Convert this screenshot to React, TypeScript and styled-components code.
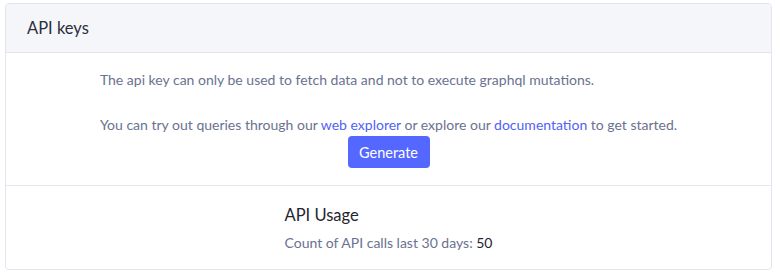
import React from 'react'
import styled, { createGlobalStyle } from 'styled-components'

const GlobalStyle = createGlobalStyle`
  html, body {
    margin: 0;
    padding: 0;
    background: #ffffff;
  }
  body {
    font-family: "Lato", "Noto Sans", sans-serif;
    -webkit-font-smoothing: antialiased;
  }
`;

const Page = styled.div`
  padding: 3px 3px 0 5px;
`;

const Card = styled.section`
  width: 767px;
  height: 267px;
  box-sizing: border-box;
  border: 1px solid #e3e4ee;
  border-radius: 4px;
  overflow: hidden;
  display: flex;
  flex-direction: column;
`;

const CardHeader = styled.header`
  height: 49px;
  box-sizing: border-box;
  padding: 0 0 0 21px;
  display: flex;
  align-items: center;
  background: #f5f6fa;
  border-bottom: 1px solid #e3e4ee;
  font-size: 16.5px;
  color: #2b2e3d;
`;

const Section = styled.div<{ $height: number; $last?: boolean }>`
  height: ${(p) => p.$height}px;
  box-sizing: border-box;
  display: flex;
  justify-content: center;
  border-bottom: ${(p) => (p.$last ? 'none' : '1px solid #e6e7ef')};
`;

const Block = styled.div<{ $top: number }>`
  padding-top: ${(p) => p.$top}px;
  display: flex;
  flex-direction: column;
`;

const Text = styled.p<{ $gap?: number }>`
  margin: 0 0 ${(p) => p.$gap ?? 0}px 0;
  font-size: 14px;
  line-height: 20px;
  color: #6a7290;
`;

const Link = styled.a`
  color: #4f62f5;
  text-decoration: none;
`;

const Button = styled.button`
  align-self: center;
  width: 82px;
  height: 32px;
  margin-top: 1px;
  border: none;
  border-radius: 4px;
  background: #5468ff;
  color: #ffffff;
  font-family: inherit;
  font-size: 14.5px;
  cursor: pointer;
`;

const Title = styled.h3`
  margin: 0 0 8px 0;
  font-size: 16.5px;
  font-weight: 400;
  line-height: 20px;
  color: #23252f;
`;

const Strong = styled.span`
  color: #23252f;
`;

export default function App() {
  return (
    <>
      <GlobalStyle />
      <Page>
        <Card>
          <CardHeader>API keys</CardHeader>
          <Section $height={133}>
            <Block $top={17}>
              <Text $gap={25}>
                The api key can only be used to fetch data and not to execute graphql mutations.
              </Text>
              <Text>
                You can try out queries through our <Link href="#">web explorer</Link> or explore
                our <Link href="#">documentation</Link> to get started.
              </Text>
              <Button>Generate</Button>
            </Block>
          </Section>
          <Section $height={83} $last>
            <Block $top={19}>
              <Title>API Usage</Title>
              <Text>
                Count of API calls last 30 days: <Strong>50</Strong>
              </Text>
            </Block>
          </Section>
        </Card>
      </Page>
    </>
  )
}
